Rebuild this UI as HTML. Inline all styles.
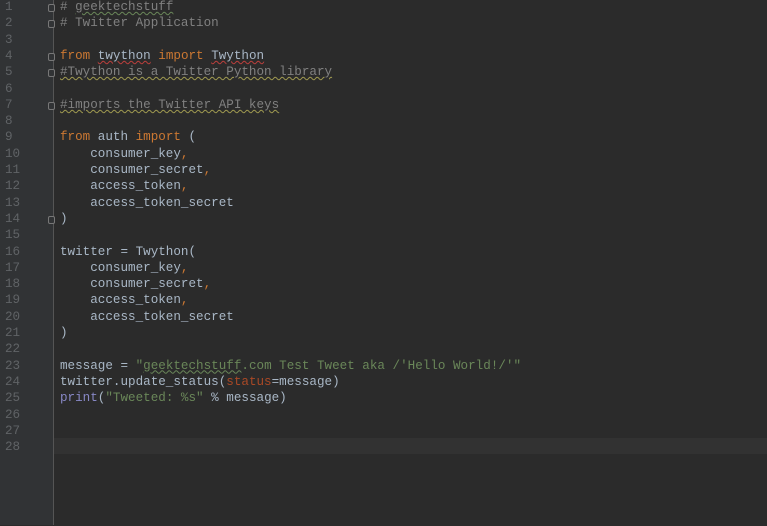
<!DOCTYPE html>
<html><head><style>
body{margin:0;width:767px;height:525px;background:#2b2b2b;overflow:hidden;position:relative;font-family:"Liberation Mono",monospace;font-size:12.6px}
#gut{position:absolute;left:0;top:0;width:53px;height:525px;background:#313335;border-right:1px solid #555}
#cur{position:absolute;left:54px;right:0;top:438px;height:16px;background:#323232}
#w{position:absolute;left:0;top:1px;width:767px;height:525px}
.ln{position:absolute;left:5px;color:#606366;height:16.3px;line-height:16.3px}
.c{position:absolute;left:60px;color:#a9b7c6;white-space:pre;height:16.3px;line-height:16.3px}
.k{color:#cc7832}.s{color:#6a8759}.m{color:#808080}.p{color:#aa4926}.b{color:#8888c6}
.w{text-decoration:underline wavy #6a8759;text-decoration-thickness:1px}
.r{text-decoration:underline wavy #bc3f3c;text-decoration-thickness:1px}
.y{text-decoration:underline wavy #a09a50;text-decoration-thickness:1px}
.f{position:absolute;left:48px;width:7px;height:8px;border:1px solid #777;border-radius:2px;background:#313335;box-sizing:border-box}
</style></head><body>
<div id="gut"></div><div id="cur"></div>
<div id="w">
<div class="ln" style="top:-2px">1</div><div class="ln" style="top:14.3px">2</div><div class="ln" style="top:30.6px">3</div><div class="ln" style="top:46.9px">4</div><div class="ln" style="top:63.2px">5</div><div class="ln" style="top:79.5px">6</div><div class="ln" style="top:95.8px">7</div><div class="ln" style="top:112.1px">8</div><div class="ln" style="top:128.4px">9</div><div class="ln" style="top:144.7px">10</div><div class="ln" style="top:161px">11</div><div class="ln" style="top:177.3px">12</div><div class="ln" style="top:193.6px">13</div><div class="ln" style="top:209.9px">14</div><div class="ln" style="top:226.2px">15</div><div class="ln" style="top:242.5px">16</div><div class="ln" style="top:258.8px">17</div><div class="ln" style="top:275.1px">18</div><div class="ln" style="top:291.4px">19</div><div class="ln" style="top:307.7px">20</div><div class="ln" style="top:324px">21</div><div class="ln" style="top:340.3px">22</div><div class="ln" style="top:356.6px">23</div><div class="ln" style="top:372.9px">24</div><div class="ln" style="top:389.2px">25</div><div class="ln" style="top:405.5px">26</div><div class="ln" style="top:421.8px">27</div><div class="ln" style="top:438.1px">28</div>
<div class="f" style="top:3px"></div><div class="f" style="top:19px"></div><div class="f" style="top:52px"></div><div class="f" style="top:68px"></div><div class="f" style="top:101px"></div><div class="f" style="top:215px"></div>
<div class="c" style="top:-2px"><span class="m"># <span class="w">geektechstuff</span></span></div>
<div class="c" style="top:14.3px"><span class="m"># Twitter Application</span></div>
<div class="c" style="top:46.9px"><span class="k">from</span> <span class="r">twython</span> <span class="k">import</span> <span class="r">Twython</span></div>
<div class="c" style="top:63.2px"><span class="m y">#Twython is a Twitter Python library</span></div>
<div class="c" style="top:95.8px"><span class="m y">#imports the Twitter API keys</span></div>
<div class="c" style="top:128.4px"><span class="k">from</span> auth <span class="k">import</span> (</div>
<div class="c" style="top:144.7px">    consumer_key<span class="k">,</span></div>
<div class="c" style="top:161px">    consumer_secret<span class="k">,</span></div>
<div class="c" style="top:177.3px">    access_token<span class="k">,</span></div>
<div class="c" style="top:193.6px">    access_token_secret</div>
<div class="c" style="top:209.9px">)</div>
<div class="c" style="top:242.5px">twitter = Twython(</div>
<div class="c" style="top:258.8px">    consumer_key<span class="k">,</span></div>
<div class="c" style="top:275.1px">    consumer_secret<span class="k">,</span></div>
<div class="c" style="top:291.4px">    access_token<span class="k">,</span></div>
<div class="c" style="top:307.7px">    access_token_secret</div>
<div class="c" style="top:324px">)</div>
<div class="c" style="top:356.6px">message = <span class="s">"<span class="w">geektechstuff</span>.com Test Tweet aka /'Hello World!/'"</span></div>
<div class="c" style="top:372.9px">twitter.update_status(<span class="p">status</span>=message)</div>
<div class="c" style="top:389.2px"><span class="b">print</span>(<span class="s">"Tweeted: %s"</span> % message)</div>
</div>
</body></html>
